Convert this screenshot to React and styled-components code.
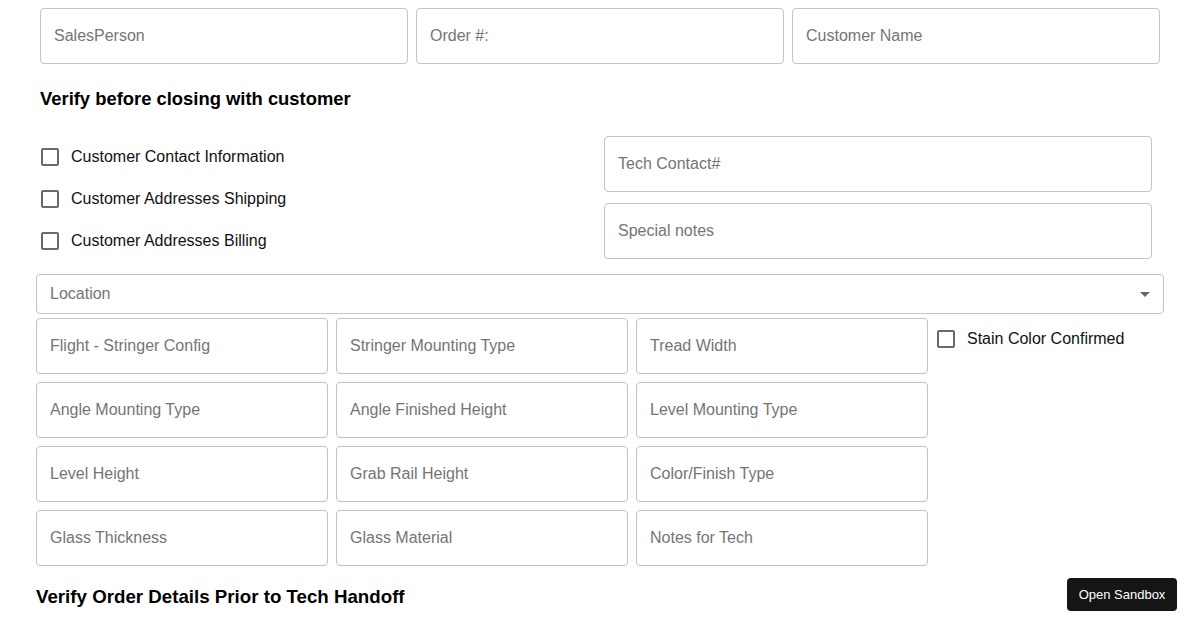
import React from "react";
import styled, { createGlobalStyle } from "styled-components";

const GlobalStyle = createGlobalStyle`
  html, body { margin: 0; padding: 0; background: #fff; }
  body { font-family: "Liberation Sans", Arial, sans-serif; color: #1a1a1a; }
  * { box-sizing: border-box; }
`;

const Page = styled.div`
  width: 1200px;
  padding: 8px 36px 0 36px;
`;

const TopRow = styled.div`
  display: grid;
  grid-template-columns: repeat(3, 1fr);
  gap: 8px;
  margin: 0 4px;
`;

const Field = styled.input`
  display: block;
  width: 100%;
  height: 56px;
  border: 1px solid #c4c4c4;
  border-radius: 4px;
  padding: 0 13px;
  font-family: "Liberation Sans", Arial, sans-serif;
  font-size: 16px;
  color: #1a1a1a;
  background: #fff;
  outline: none;
  &::placeholder { color: #757575; opacity: 1; }
`;

const Heading = styled.h3`
  margin: ${(p) => p.$mt}px 0 0 ${(p) => p.$ml}px;
  font-size: ${(p) => p.$size}px;
  line-height: 22px;
  font-weight: 700;
  color: #000;
`;

const VerifySection = styled.div`
  display: grid;
  grid-template-columns: 1fr 548px;
  padding: 0 12px 0 4px;
  margin-top: 26px;
`;

const CheckList = styled.div`
  display: flex;
  flex-direction: column;
`;

const CheckRow = styled.label`
  display: flex;
  align-items: center;
  height: 42px;
  padding-left: 1px;
  gap: 12px;
  font-size: 16px;
  color: #111;
  align-self: start;
`;

const Box = styled.span`
  width: 18px;
  height: 18px;
  border: 2px solid #6a6a6a;
  border-radius: 2px;
  flex: none;
`;

const FieldStack = styled.div`
  display: flex;
  flex-direction: column;
  gap: 11px;
`;

const Select = styled.div`
  margin-top: 12px;
  height: 40px;
  border: 1px solid #c4c4c4;
  border-radius: 4px;
  padding: 0 13px;
  display: flex;
  align-items: center;
  justify-content: space-between;
  font-size: 16px;
  color: #757575;
`;

const Arrow = styled.span`
  width: 0;
  height: 0;
  border-left: 5px solid transparent;
  border-right: 5px solid transparent;
  border-top: 5px solid #666;
`;

const DetailGrid = styled.div`
  margin-top: 4px;
  display: grid;
  grid-template-columns: repeat(3, 292px) 1fr;
  grid-auto-rows: 56px;
  gap: 8px;
`;

const SideCheck = styled(CheckRow)`
  grid-column: 4;
  grid-row: 1;
`;

const SandboxButton = styled.button`
  position: fixed;
  right: 23px;
  bottom: 19px;
  width: 110px;
  height: 33px;
  background: #151515;
  color: #fff;
  border: none;
  border-radius: 4px;
  font-family: "Liberation Sans", Arial, sans-serif;
  font-size: 13px;
  padding: 0;
`;

const Check = ({ children }) => (
  <CheckRow>
    <Box />
    {children}
  </CheckRow>
);

const detailFields = [
  "Flight - Stringer Config",
  "Stringer Mounting Type",
  "Tread Width",
  "Angle Mounting Type",
  "Angle Finished Height",
  "Level Mounting Type",
  "Level Height",
  "Grab Rail Height",
  "Color/Finish Type",
  "Glass Thickness",
  "Glass Material",
  "Notes for Tech",
];

export default function App() {
  return (
    <>
      <GlobalStyle />
      <Page>
        <TopRow>
          <Field placeholder="SalesPerson" />
          <Field placeholder="Order #:" />
          <Field placeholder="Customer Name" />
        </TopRow>
        <Heading $mt={24} $ml={4} $size={18.4}>Verify before closing with customer</Heading>
        <VerifySection>
          <CheckList>
            <Check>Customer Contact Information</Check>
            <Check>Customer Addresses Shipping</Check>
            <Check>Customer Addresses Billing</Check>
          </CheckList>
          <FieldStack>
            <Field placeholder="Tech Contact#" />
            <Field placeholder="Special notes" />
          </FieldStack>
        </VerifySection>
        <Select>
          Location
          <Arrow />
        </Select>
        <DetailGrid>
          {detailFields.map((f, i) => (
            <Field
              key={f}
              placeholder={f}
              style={{ gridColumn: (i % 3) + 1, gridRow: Math.floor(i / 3) + 1 }}
            />
          ))}
          <SideCheck>
            <Box />
            Stain Color Confirmed
          </SideCheck>
        </DetailGrid>
        <Heading $mt={20} $ml={0} $size={18.72}>Verify Order Details Prior to Tech Handoff</Heading>
      </Page>
      <SandboxButton>Open Sandbox</SandboxButton>
    </>
  );
}
